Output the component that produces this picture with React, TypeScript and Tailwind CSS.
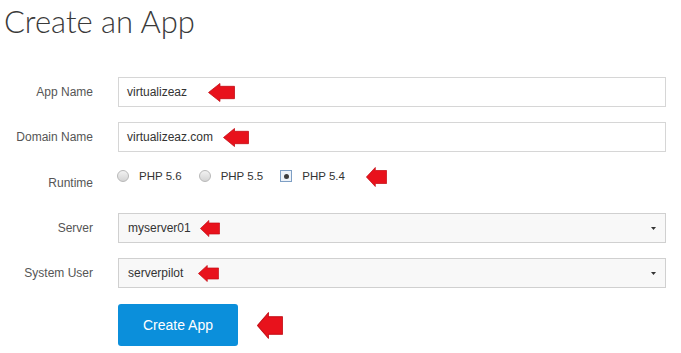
import React from 'react';

type ArrowProps = { className?: string };

function Arrow({ className }: ArrowProps) {
  return (
    <svg className={className} viewBox="0 0 26 20" preserveAspectRatio="none" aria-hidden>
      <polygon
        points="0.5,10 11.5,0.5 11.5,3.5 25.5,3.5 25.5,16.5 11.5,16.5 11.5,19.5"
        fill="#e8121c"
        stroke="#c20a12"
        strokeWidth="0.8"
        strokeLinejoin="round"
      />
    </svg>
  );
}

function Label({ children }: { children: React.ReactNode }) {
  return <div className="w-[93px] shrink-0 text-right text-[12px] text-[#555]">{children}</div>;
}

function Caret() {
  return (
    <svg className="ml-auto mr-[9px] h-[3px] w-[5px]" viewBox="0 0 5 3" aria-hidden>
      <polygon points="0,0 5,0 2.5,3" fill="#333" />
    </svg>
  );
}

function Radio({ checked }: { checked?: boolean }) {
  if (checked) {
    return (
      <span className="flex h-[12px] w-[12px] items-center justify-center border border-[#7e9fc4] bg-[#eef3f9]">
        <span className="h-[5px] w-[5px] rounded-full bg-[#3d3d3d]" />
      </span>
    );
  }
  return (
    <span className="h-[12px] w-[12px] rounded-full border border-[#b8b8b8] bg-gradient-to-b from-[#f2f2f2] to-[#d4d4d4]" />
  );
}

export default function App() {
  const runtimes = [
    { label: 'PHP 5.6', checked: false },
    { label: 'PHP 5.5', checked: false },
    { label: 'PHP 5.4', checked: true },
  ];

  return (
    <div
      className="h-[353px] w-[681px] bg-white pr-[15px]"
      style={{ fontFamily: '"Liberation Sans", Arial, sans-serif' }}
    >
      <h1
        className="pl-[4px] pt-[2px] text-[31px] font-light leading-[38px] text-[#3a3a3a]"
        style={{ fontFamily: 'Lato, "Open Sans", sans-serif' }}
      >
        Create an App
      </h1>

      <div className="mt-[37px] flex flex-col gap-[15px]">
        <div className="flex items-center gap-[25px]">
          <Label>App Name</Label>
          <div className="flex h-[30px] flex-1 items-center border border-[#d6d6d6] bg-white pl-2 text-[12px] text-[#333]">
            <span>virtualizeaz</span>
            <Arrow className="ml-[21px] h-[19px] w-[27px]" />
          </div>
        </div>

        <div className="flex items-center gap-[25px]">
          <Label>Domain Name</Label>
          <div className="flex h-[30px] flex-1 items-center border border-[#d6d6d6] bg-white pl-2 text-[12px] text-[#333]">
            <span>virtualizeaz.com</span>
            <Arrow className="ml-[10px] h-[19px] w-[26px]" />
          </div>
        </div>

        <div className="flex h-[31px] items-start gap-[24px]">
          <div className="self-end pb-[6px]">
            <Label>Runtime</Label>
          </div>
          <div className="flex items-start text-[11.5px] text-[#333]">
            {runtimes.map((r) => (
              <div key={r.label} className="mr-[17px] flex items-center gap-[10px] pt-[3px]">
                <Radio checked={r.checked} />
                <span className="leading-[12px]">{r.label}</span>
              </div>
            ))}
            <Arrow className="ml-[4px] h-[20px] w-[21px]" />
          </div>
        </div>

        <div className="flex items-center gap-[25px]">
          <Label>Server</Label>
          <div className="flex h-[30px] flex-1 items-center border border-[#d0d0d0] bg-[#f8f8f8] pl-[9px] text-[12px] text-[#333]">
            <span>myserver01</span>
            <Arrow className="ml-[9px] h-[17px] w-[20px]" />
            <Caret />
          </div>
        </div>

        <div className="flex items-center gap-[25px]">
          <Label>System User</Label>
          <div className="flex h-[30px] flex-1 items-center border border-[#d0d0d0] bg-[#f8f8f8] pl-[9px] text-[12px] text-[#333]">
            <span>serverpilot</span>
            <Arrow className="ml-[15px] h-[17px] w-[21px]" />
            <Caret />
          </div>
        </div>

        <div className="mt-px flex items-center pl-[118px]">
          <button className="h-[42px] w-[120px] rounded-[3px] bg-[#0b8fdb] text-[14px] text-white">
            Create App
          </button>
          <Arrow className="ml-[19px] h-[27px] w-[26px]" />
        </div>
      </div>
    </div>
  );
}
